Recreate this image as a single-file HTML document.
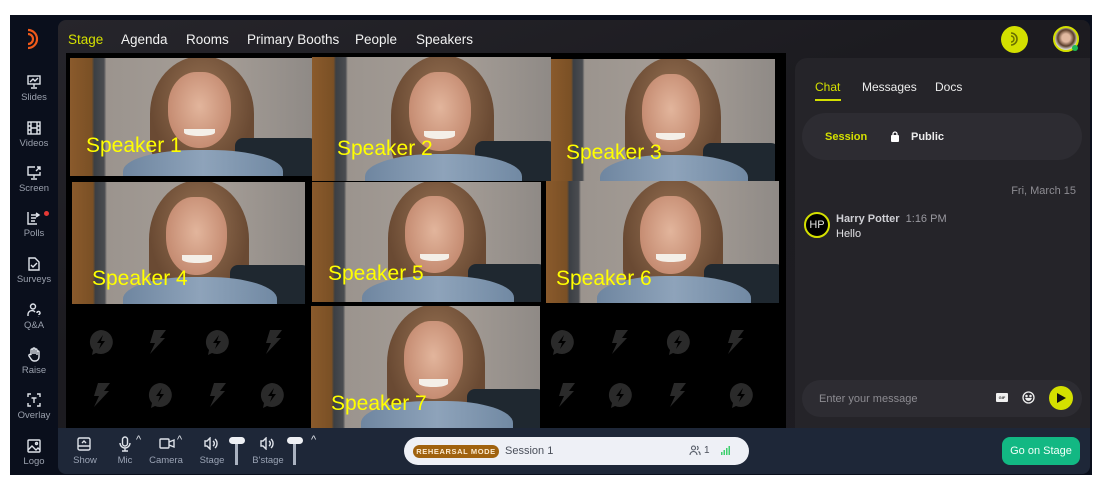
<!DOCTYPE html>
<html><head><meta charset="utf-8">
<style>
*{margin:0;padding:0;box-sizing:border-box}
body{width:1109px;height:492px;background:#fff;position:relative;overflow:hidden;font-family:"Liberation Sans",sans-serif}
.abs{position:absolute}
#frame{left:10px;top:15px;width:1082px;height:460px;background:#0a0f1c}
#main{left:58px;top:20px;width:1032px;height:454px;background:linear-gradient(160deg,#26252b,#1c1b20 40%,#1e1d22);border-radius:8px;overflow:hidden}
.nav{top:32px;font-size:13.5px;color:#f2f2f2;font-weight:normal;letter-spacing:0}
.side{left:10px;width:48px;text-align:center;color:#9aa0ad;font-size:9.5px}
.side svg{display:block;margin:0 auto 3px}
#video{left:66px;top:53px;width:720px;height:375px;background:#000}
.tile{position:absolute;overflow:hidden;background:linear-gradient(90deg,#8a5a2c 0,#7a5025 9%,#3b3f44 10%,#4a4c50 14%,#9b948e 15%,#a69e97 60%,#8f8a86 100%)}
.tile .hair{position:absolute;left:33%;width:43%;top:-2%;height:98%;background:radial-gradient(ellipse at 50% 40%,#9a7556,#6a4a33 70%);border-radius:50% 50% 25% 25%}
.tile .chair{position:absolute;left:68%;width:34%;top:68%;height:40%;background:#1f2830;border-radius:8px}
.tile .face{position:absolute;left:40.5%;width:26%;top:12%;height:64%;background:radial-gradient(ellipse at 50% 45%,#e2b59c,#c48a70 75%);border-radius:45% 45% 48% 48%}
.tile .smile{position:absolute;left:47%;width:13%;top:60%;height:6%;background:#f4efe8;border-radius:0 0 50% 50%}
.tile .jacket{position:absolute;left:22%;width:66%;top:78%;height:40%;background:linear-gradient(90deg,#6f86a0,#8ea3ba 50%,#7189a3);border-radius:45% 45% 0 0}
.tile .lbl{position:absolute;color:#ffff00;font-size:21px;white-space:nowrap}
.ic{position:absolute;width:26px;height:26px}
#chat{left:795px;top:58px;width:295px;height:370px;background:#252429;border-radius:12px 0 0 0}
#bar{left:58px;top:428px;width:1032px;height:46px;background:#1e2738;border-radius:0 0 8px 8px}
.bl{position:absolute;top:455px;font-size:9.5px;color:#9aa3b4;text-align:center}
</style></head><body>
<div id="frame" class="abs"></div>
<svg class="abs" style="left:24px;top:27px" width="20" height="24" viewBox="0 0 20 24"><path d="M4 3 A9 9 0 0 1 4 21" fill="none" stroke="#f05a1a" stroke-width="2.2"/><path d="M4 7 A5 5 0 0 1 4 17" fill="none" stroke="#f05a1a" stroke-width="2.2"/></svg>

<div class="abs side" style="top:75px"><svg width="14" height="14" viewBox="0 0 14 14" fill="none" stroke="#dfe3ea" stroke-width="1.4"><rect x="1" y="1" width="12" height="8"/><path d="M7 9v3M4 13h6M3 7l3-3 2 2 3-3"/></svg>Slides</div>
<div class="abs side" style="top:121px"><svg width="14" height="14" viewBox="0 0 14 14" fill="none" stroke="#dfe3ea" stroke-width="1.4"><rect x="1" y="1" width="12" height="12"/><path d="M4 1v12M10 1v12M1 5h3M1 9h3M10 5h3M10 9h3M4 7h6"/></svg>Videos</div>
<div class="abs side" style="top:166px"><svg width="14" height="14" viewBox="0 0 14 14" fill="none" stroke="#dfe3ea" stroke-width="1.4"><path d="M8 1H1v8h12V6M7 9v3M4 13h6M9 5l4-4M10 1h3v3"/></svg>Screen</div>
<div class="abs side" style="top:211px"><svg width="16" height="14" viewBox="0 0 16 14" fill="none" stroke="#dfe3ea" stroke-width="1.4"><path d="M2 1v12h9M5 4h7M5 7h5M5 10h4M10 2l3 2-3 2"/></svg>Polls</div>
<div class="abs" style="left:44px;top:211px;width:5px;height:5px;border-radius:50%;background:#e53935"></div>
<div class="abs side" style="top:257px"><svg width="14" height="14" viewBox="0 0 14 14" fill="none" stroke="#dfe3ea" stroke-width="1.4"><path d="M2 1h6l4 4v8H2zM4 8l2 2 4-4"/></svg>Surveys</div>
<div class="abs side" style="top:303px"><svg width="14" height="14" viewBox="0 0 14 14" fill="none" stroke="#dfe3ea" stroke-width="1.4"><circle cx="6" cy="3.5" r="2.5"/><path d="M1 13v-2a4 4 0 0 1 7-2M10 10a1.5 1.5 0 1 1 2 1.4V12M11.5 13.5v.2"/></svg>Q&amp;A</div>
<div class="abs side" style="top:347px"><svg width="14" height="15" viewBox="0 0 14 15" fill="none" stroke="#dfe3ea" stroke-width="1.4"><path d="M4 8V3a1 1 0 0 1 2 0v4V2a1 1 0 0 1 2 0v5V3a1 1 0 0 1 2 0v5V5a1 1 0 0 1 2 0v5a4 4 0 0 1-4 4H7a4 4 0 0 1-3-2L2 9a1 1 0 0 1 2-1z"/></svg>Raise</div>
<div class="abs side" style="top:393px"><svg width="14" height="14" viewBox="0 0 14 14" fill="none" stroke="#dfe3ea" stroke-width="1.4"><path d="M1 4V1h3M10 1h3v3M13 10v3h-3M4 13H1v-3M4.5 5h5M7 5v5"/></svg>Overlay</div>
<div class="abs side" style="top:439px"><svg width="14" height="14" viewBox="0 0 14 14" fill="none" stroke="#dfe3ea" stroke-width="1.4"><rect x="1" y="1" width="12" height="12" rx="1"/><path d="M1 11l4-4 4 4 2-2 2 2"/><circle cx="9.5" cy="4.5" r="1"/></svg>Logo</div>

<div id="main" class="abs"></div>
<div class="abs nav" style="left:68px;color:#d4e000">Stage</div>
<div class="abs nav" style="left:121px">Agenda</div>
<div class="abs nav" style="left:186px">Rooms</div>
<div class="abs nav" style="left:247px">Primary Booths</div>
<div class="abs nav" style="left:355px">People</div>
<div class="abs nav" style="left:416px">Speakers</div>

<div class="abs" style="left:1001px;top:26px;width:27px;height:27px;border-radius:50%;background:#d4e000"></div>
<svg class="abs" style="left:1008px;top:31px" width="14" height="16" viewBox="0 0 14 16"><path d="M3 2A6 6 0 0 1 3 14" fill="none" stroke="#6a7000" stroke-width="1.6"/><path d="M3 5A3 3 0 0 1 3 11" fill="none" stroke="#6a7000" stroke-width="1.4"/></svg>
<div class="abs" style="left:1053px;top:26px;width:26px;height:26px;border-radius:50%;border:2px solid #d4e000;background:radial-gradient(circle at 50% 45%,#e0b8a0 25%,#5a3d2a 50%,#d8d4d0 70%)"></div>
<div class="abs" style="left:1072px;top:45px;width:6px;height:6px;border-radius:50%;background:#1db954"></div>

<div id="video" class="abs"></div>
<div class="tile" style="left:70px;top:58px;width:242px;height:118px"><div class="hair"></div><div class="chair"></div><div class="face"></div><div class="smile"></div><div class="jacket"></div><div class="lbl" style="left:16px;top:76px">Speaker 1</div></div>
<div class="tile" style="left:312px;top:57px;width:239px;height:124px"><div class="hair"></div><div class="chair"></div><div class="face"></div><div class="smile"></div><div class="jacket"></div><div class="lbl" style="left:25px;top:80px">Speaker 2</div></div>
<div class="tile" style="left:551px;top:59px;width:224px;height:123px"><div class="hair"></div><div class="chair"></div><div class="face"></div><div class="smile"></div><div class="jacket"></div><div class="lbl" style="left:15px;top:82px">Speaker 3</div></div>
<div class="tile" style="left:72px;top:182px;width:233px;height:122px"><div class="hair"></div><div class="chair"></div><div class="face"></div><div class="smile"></div><div class="jacket"></div><div class="lbl" style="left:20px;top:85px">Speaker 4</div></div>
<div class="tile" style="left:312px;top:182px;width:229px;height:120px"><div class="hair"></div><div class="chair"></div><div class="face"></div><div class="smile"></div><div class="jacket"></div><div class="lbl" style="left:16px;top:80px">Speaker 5</div></div>
<div class="tile" style="left:546px;top:181px;width:233px;height:122px"><div class="hair"></div><div class="chair"></div><div class="face"></div><div class="smile"></div><div class="jacket"></div><div class="lbl" style="left:10px;top:86px">Speaker 6</div></div>
<div class="tile" style="left:311px;top:306px;width:229px;height:122px"><div class="hair"></div><div class="chair"></div><div class="face"></div><div class="smile"></div><div class="jacket"></div><div class="lbl" style="left:20px;top:86px">Speaker 7</div></div>

<svg class="ic" style="left:88px;top:329px" viewBox="0 0 26 26"><path d="M13 1a12 12 0 1 1-5 23l-4 2 1-5A12 12 0 0 1 13 1z" fill="#2a2a2a"/><path d="M15 6l-6 8h4l-2 6 6-8h-4z" fill="#000"/></svg>
<svg class="ic" style="left:144px;top:329px" viewBox="0 0 26 26"><path d="M10 1h12l-6 8h5L6 25l5-11H6z" fill="#2a2a2a"/></svg>
<svg class="ic" style="left:204px;top:329px" viewBox="0 0 26 26"><path d="M13 1a12 12 0 1 1-5 23l-4 2 1-5A12 12 0 0 1 13 1z" fill="#2a2a2a"/><path d="M15 6l-6 8h4l-2 6 6-8h-4z" fill="#000"/></svg>
<svg class="ic" style="left:260px;top:329px" viewBox="0 0 26 26"><path d="M10 1h12l-6 8h5L6 25l5-11H6z" fill="#2a2a2a"/></svg>
<svg class="ic" style="left:88px;top:382px" viewBox="0 0 26 26"><path d="M10 1h12l-6 8h5L6 25l5-11H6z" fill="#2a2a2a"/></svg>
<svg class="ic" style="left:147px;top:382px" viewBox="0 0 26 26"><path d="M13 1a12 12 0 1 1-5 23l-4 2 1-5A12 12 0 0 1 13 1z" fill="#2a2a2a"/><path d="M15 6l-6 8h4l-2 6 6-8h-4z" fill="#000"/></svg>
<svg class="ic" style="left:204px;top:382px" viewBox="0 0 26 26"><path d="M10 1h12l-6 8h5L6 25l5-11H6z" fill="#2a2a2a"/></svg>
<svg class="ic" style="left:259px;top:382px" viewBox="0 0 26 26"><path d="M13 1a12 12 0 1 1-5 23l-4 2 1-5A12 12 0 0 1 13 1z" fill="#2a2a2a"/><path d="M15 6l-6 8h4l-2 6 6-8h-4z" fill="#000"/></svg>
<svg class="ic" style="left:549px;top:329px" viewBox="0 0 26 26"><path d="M13 1a12 12 0 1 1-5 23l-4 2 1-5A12 12 0 0 1 13 1z" fill="#2a2a2a"/><path d="M15 6l-6 8h4l-2 6 6-8h-4z" fill="#000"/></svg>
<svg class="ic" style="left:606px;top:329px" viewBox="0 0 26 26"><path d="M10 1h12l-6 8h5L6 25l5-11H6z" fill="#2a2a2a"/></svg>
<svg class="ic" style="left:665px;top:329px" viewBox="0 0 26 26"><path d="M13 1a12 12 0 1 1-5 23l-4 2 1-5A12 12 0 0 1 13 1z" fill="#2a2a2a"/><path d="M15 6l-6 8h4l-2 6 6-8h-4z" fill="#000"/></svg>
<svg class="ic" style="left:722px;top:329px" viewBox="0 0 26 26"><path d="M10 1h12l-6 8h5L6 25l5-11H6z" fill="#2a2a2a"/></svg>
<svg class="ic" style="left:553px;top:382px" viewBox="0 0 26 26"><path d="M10 1h12l-6 8h5L6 25l5-11H6z" fill="#2a2a2a"/></svg>
<svg class="ic" style="left:607px;top:382px" viewBox="0 0 26 26"><path d="M13 1a12 12 0 1 1-5 23l-4 2 1-5A12 12 0 0 1 13 1z" fill="#2a2a2a"/><path d="M15 6l-6 8h4l-2 6 6-8h-4z" fill="#000"/></svg>
<svg class="ic" style="left:664px;top:382px" viewBox="0 0 26 26"><path d="M10 1h12l-6 8h5L6 25l5-11H6z" fill="#2a2a2a"/></svg>
<svg class="ic" style="left:728px;top:382px" viewBox="0 0 26 26"><path d="M13 1a12 12 0 1 1-5 23l-4 2 1-5A12 12 0 0 1 13 1z" fill="#2a2a2a"/><path d="M15 6l-6 8h4l-2 6 6-8h-4z" fill="#000"/></svg>

<div id="chat" class="abs"></div>
<div class="abs" style="left:815px;top:80px;font-size:12px;color:#d4e000">Chat</div>
<div class="abs" style="left:815px;top:99px;width:26px;height:2px;background:#d4e000"></div>
<div class="abs" style="left:862px;top:80px;font-size:12px;color:#ececec">Messages</div>
<div class="abs" style="left:935px;top:80px;font-size:12px;color:#ececec">Docs</div>
<div class="abs" style="left:802px;top:113px;width:280px;height:47px;border-radius:24px;background:#2d2c32"></div>
<div class="abs" style="left:825px;top:131px;font-size:11px;font-weight:bold;color:#d4e000">Session</div>
<svg class="abs" style="left:890px;top:131px" width="10" height="11" viewBox="0 0 10 11"><path d="M3 4V3a2 2 0 0 1 4 0v1" fill="none" stroke="#fff" stroke-width="1.3"/><rect x="1" y="4" width="8" height="7" rx="1" fill="#fff"/></svg>
<div class="abs" style="left:911px;top:131px;font-size:11px;font-weight:bold;color:#ececec">Public</div>
<div class="abs" style="left:1000px;top:185px;width:76px;text-align:right;font-size:11px;color:#8d8c92">Fri, March 15</div>
<div class="abs" style="left:804px;top:212px;width:26px;height:26px;border-radius:50%;border:2px solid #d4e000;background:#000;color:#e0e0e0;font-size:11px;text-align:center;line-height:22px">HP</div>
<div class="abs" style="left:836px;top:213px;font-size:11px;font-weight:bold;color:#cfcfd4">Harry Potter <span style="font-weight:normal;color:#9a99a0;margin-left:3px">1:16 PM</span></div>
<div class="abs" style="left:836px;top:228px;font-size:11px;color:#e0e0e4">Hello</div>
<div class="abs" style="left:802px;top:380px;width:280px;height:37px;border-radius:19px;background:#2d2c32"></div>
<div class="abs" style="left:819px;top:393px;font-size:11px;color:#8d8c92">Enter your message</div>
<div class="abs" style="left:996px;top:393px;width:12px;height:9px;background:#f0f0f0;border-radius:1px;font-size:4px;color:#333;text-align:center;line-height:9px;font-weight:bold">GIF</div>
<svg class="abs" style="left:1022px;top:391px" width="13" height="13" viewBox="0 0 13 13" fill="none" stroke="#eee" stroke-width="1.3"><circle cx="6.5" cy="6.5" r="5.5"/><path d="M4 7.5a2.7 2.7 0 0 0 5 0z" fill="#eee"/><circle cx="4.5" cy="5" r=".6" fill="#eee"/><circle cx="8.5" cy="5" r=".6" fill="#eee"/></svg>
<div class="abs" style="left:1049px;top:386px;width:24px;height:24px;border-radius:50%;background:#d4e000"></div>
<svg class="abs" style="left:1057px;top:393px" width="9" height="10" viewBox="0 0 9 10"><path d="M0 0l9 5-9 5z" fill="#111"/></svg>

<div id="bar" class="abs"></div>
<svg class="abs" style="left:77px;top:437px" width="14" height="14" viewBox="0 0 14 14" fill="none" stroke="#dfe3ea" stroke-width="1.4"><rect x="1" y="1" width="12" height="12" rx="1.5"/><path d="M1 9h12M5 6l2-2 2 2"/></svg>
<div class="bl" style="left:70px;width:30px">Show</div>
<svg class="abs" style="left:119px;top:436px" width="12" height="16" viewBox="0 0 12 16" fill="none" stroke="#dfe3ea" stroke-width="1.4"><rect x="3.5" y="1" width="5" height="9" rx="2.5"/><path d="M1 7a5 5 0 0 0 10 0M6 12v3M3 15h6"/></svg>
<div class="abs" style="left:136px;top:434px;font-size:11px;color:#dfe3ea">^</div>
<div class="bl" style="left:112px;width:26px">Mic</div>
<svg class="abs" style="left:159px;top:438px" width="16" height="11" viewBox="0 0 16 11" fill="none" stroke="#dfe3ea" stroke-width="1.4"><rect x="1" y="1" width="9" height="9" rx="1"/><path d="M10 4l5-2v7l-5-2"/></svg>
<div class="abs" style="left:177px;top:434px;font-size:11px;color:#dfe3ea">^</div>
<div class="bl" style="left:148px;width:36px">Camera</div>
<svg class="abs" style="left:204px;top:437px" width="14" height="13" viewBox="0 0 14 13" fill="none" stroke="#dfe3ea" stroke-width="1.4"><path d="M1 4h2l3-3v11L3 9H1zM9 4a3 3 0 0 1 0 5M11 2a6 6 0 0 1 0 9"/></svg>
<div class="bl" style="left:197px;width:30px">Stage</div>
<div class="abs" style="left:235px;top:440px;width:3px;height:25px;background:#aab2c0"></div>
<div class="abs" style="left:229px;top:437px;width:16px;height:7px;border-radius:4px;background:#eef0f4"></div>
<svg class="abs" style="left:260px;top:437px" width="14" height="13" viewBox="0 0 14 13" fill="none" stroke="#dfe3ea" stroke-width="1.4"><path d="M1 4h2l3-3v11L3 9H1zM9 4a3 3 0 0 1 0 5M11 2a6 6 0 0 1 0 9"/></svg>
<div class="bl" style="left:250px;width:36px">B'stage</div>
<div class="abs" style="left:293px;top:440px;width:3px;height:25px;background:#aab2c0"></div>
<div class="abs" style="left:287px;top:437px;width:16px;height:7px;border-radius:4px;background:#eef0f4"></div>
<div class="abs" style="left:311px;top:434px;font-size:11px;color:#dfe3ea">^</div>

<div class="abs" style="left:404px;top:437px;width:345px;height:28px;border-radius:14px;background:#eef0f6"></div>
<div class="abs" style="left:413px;top:445px;width:86px;height:13px;border-radius:7px;background:#a0620f;color:#fbe9cc;font-size:7.5px;font-weight:bold;text-align:center;line-height:13px;letter-spacing:.6px">REHEARSAL MODE</div>
<div class="abs" style="left:505px;top:445px;font-size:11px;color:#4a4f5a">Session 1</div>
<svg class="abs" style="left:689px;top:445px" width="12" height="11" viewBox="0 0 12 11" fill="none" stroke="#555b66" stroke-width="1.1"><circle cx="4.5" cy="3" r="2"/><path d="M1 10a3.5 3.5 0 0 1 7 0M8 1.2a2 2 0 0 1 0 3.6M9.5 6.5a3.5 3.5 0 0 1 1.5 3.5"/></svg>
<div class="abs" style="left:704px;top:445px;font-size:10px;color:#4a4f5a">1</div>
<svg class="abs" style="left:721px;top:446px" width="9" height="9" viewBox="0 0 9 9"><rect x="0" y="6" width="1.5" height="3" fill="#3ecf6e"/><rect x="2.5" y="4" width="1.5" height="5" fill="#3ecf6e"/><rect x="5" y="2" width="1.5" height="7" fill="#3ecf6e"/><rect x="7.5" y="0" width="1.5" height="9" fill="#3ecf6e"/></svg>

<div class="abs" style="left:1002px;top:437px;width:78px;height:28px;border-radius:8px;background:#12b883;color:#f2fff9;font-size:11px;text-align:center;line-height:28px">Go on Stage</div>
</body></html>
